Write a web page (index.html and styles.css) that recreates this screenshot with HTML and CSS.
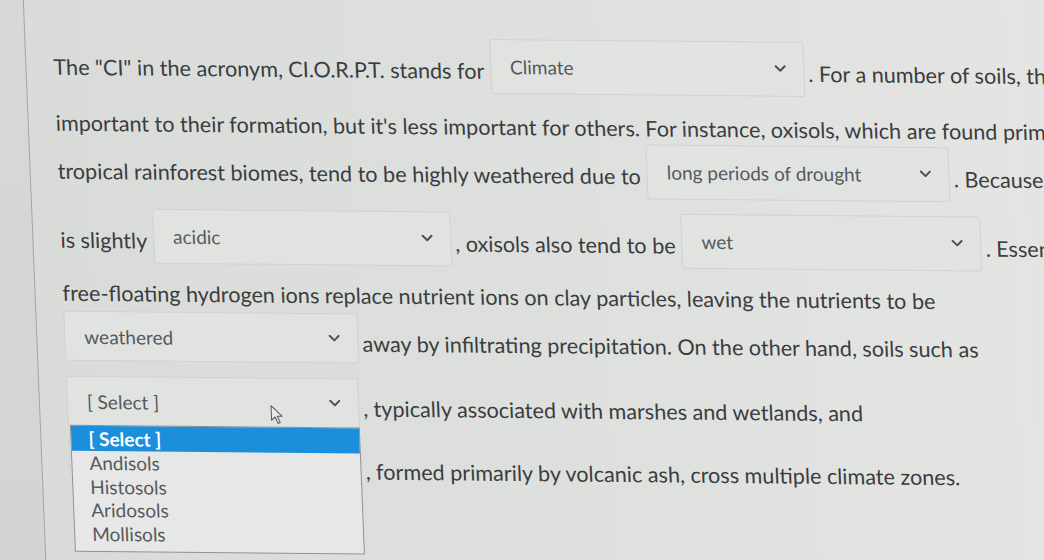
FILE: index.html
```html
<!DOCTYPE html>
<html lang="en">
<head>
<meta charset="utf-8">
<title>Quiz question</title>
<link rel="stylesheet" href="styles.css">
</head>
<body>
<div class="page">
  <div class="rail"></div>
  <div class="content">
    <div class="q-line">
      <span>The "CI" in the acronym, CI.O.R.P.T. stands for</span>
      <div class="dd dd-w314"><span class="dd-value">Climate</span><svg class="chev" viewBox="0 0 12 8"><path d="M1.5 1.5 L6 6 L10.5 1.5"/></svg></div>
      <span>. For a number of soils, the climate is very</span>
    </div>
    <div class="q-line">
      <span>important to their formation, but it's less important for others. For instance, oxisols, which are found primarily in</span>
    </div>
    <div class="q-line">
      <span>tropical rainforest biomes, tend to be highly weathered due to</span>
      <div class="dd dd-w303"><span class="dd-value">long periods of drought</span><svg class="chev" viewBox="0 0 12 8"><path d="M1.5 1.5 L6 6 L10.5 1.5"/></svg></div>
      <span>. Because the soil</span>
    </div>
    <div class="q-line">
      <span>is slightly</span>
      <div class="dd dd-w298"><span class="dd-value">acidic</span><svg class="chev" viewBox="0 0 12 8"><path d="M1.5 1.5 L6 6 L10.5 1.5"/></svg></div>
      <span>, oxisols also tend to be</span>
      <div class="dd dd-w300"><span class="dd-value">wet</span><svg class="chev" viewBox="0 0 12 8"><path d="M1.5 1.5 L6 6 L10.5 1.5"/></svg></div>
      <span>. Essentially,</span>
    </div>
    <div class="q-line">
      <span>free-floating hydrogen ions replace nutrient ions on clay particles, leaving the nutrients to be</span>
    </div>
    <div class="q-line">
      <div class="dd dd-w294 dd-short"><span class="dd-value">weathered</span><svg class="chev" viewBox="0 0 12 8"><path d="M1.5 1.5 L6 6 L10.5 1.5"/></svg></div>
      <span>away by infiltrating precipitation. On the other hand, soils such as</span>
    </div>
    <div class="q-line">
      <div class="dd dd-w292 dd-short dd-open">
        <span class="dd-value">[ Select ]</span><svg class="chev" viewBox="0 0 12 8"><path d="M1.5 1.5 L6 6 L10.5 1.5"/></svg>
        <svg class="cursor" viewBox="0 0 13 20"><path d="M1 1 L1 15.5 L4.6 12.2 L7.4 18.6 L9.6 17.6 L6.9 11.4 L11.6 11.4 Z"/></svg>
        <ul class="dd-list">
          <li class="is-active">[ Select ]</li>
          <li>Andisols</li>
          <li>Histosols</li>
          <li>Aridosols</li>
          <li>Mollisols</li>
        </ul>
      </div>
      <span>, typically associated with marshes and wetlands, and</span>
    </div>
    <div class="q-line">
      <div class="dd dd-w292 dd-short"><span class="dd-value">[ Select ]</span><svg class="chev" viewBox="0 0 12 8"><path d="M1.5 1.5 L6 6 L10.5 1.5"/></svg></div>
      <span>, formed primarily by volcanic ash, cross multiple climate zones.</span>
    </div>
  </div>
</div>
</body>
</html>
```

FILE: styles.css
```css
html, body {
  margin: 0;
  height: 100%;
  overflow: hidden;
}

body {
  background: #d6d8d6;
  font-family: Lato, "Open Sans", "Liberation Sans", sans-serif;
}

.page {
  display: flex;
  width: 1300px;
  height: 660px;
  margin: -20px 0 0 -30px;
  transform: skew(2.3deg, 0.55deg);
  transform-origin: 0 0;
  background: linear-gradient(90deg, #d9dbd9 0%, #dee0de 45%, #e4e5e3 80%, #e2e3e1 100%);
}

.rail {
  flex: 0 0 52px;
  background: linear-gradient(180deg, #d7d9d7, #d2d4d2);
  border-right: 1.5px solid #a3a5a3;
}

.content {
  flex: 1;
  padding: 66px 0 0 27px;
  color: #3a3d40;
  font-size: 21.6px;
}

.q-line {
  display: flex;
  align-items: center;
  height: 40px;
  white-space: nowrap;
}

.q-line:nth-child(2) { margin-top: 16px; }
.q-line:nth-child(3) { margin-top: 8px; }
.q-line:nth-child(4) { margin-top: 29px; }
.q-line:nth-child(5) { margin-top: 13px; }
.q-line:nth-child(6) { margin-top: 8px; }
.q-line:nth-child(7) { margin-top: 25px; }
.q-line:nth-child(8) { margin-top: 23px; }

.dd {
  position: relative;
  flex: none;
  display: flex;
  align-items: center;
  box-sizing: border-box;
  height: 55px;
  margin: 0 4px 10px 6px;
  padding: 0 17px 0 19px;
  background: #e1e3e1;
  border: 1px solid #d0d2d0;
  border-radius: 3px;
  color: #54595d;
  font-size: 19px;
}

.dd-short { height: 50px; margin-left: 0; }

.dd-w314 { width: 314px; }
.dd-w303 { width: 303px; }
.dd-w300 { width: 300px; }
.dd-w298 { width: 298px; }
.dd-w294 { width: 294px; }
.dd-w292 { width: 292px; }

.dd-value { flex: 1; }

.chev {
  width: 12px;
  height: 8px;
  fill: none;
  stroke: #4b5054;
  stroke-width: 2;
  stroke-linecap: round;
  stroke-linejoin: round;
}

.cursor {
  position: absolute;
  left: 202px;
  top: 26px;
  width: 13px;
  height: 20px;
  fill: #e8e9e8;
  stroke: #5a5e62;
  stroke-width: 1.1;
  stroke-linejoin: round;
  z-index: 3;
}

.dd-list {
  position: absolute;
  top: 100%;
  left: 1px;
  z-index: 2;
  box-sizing: border-box;
  width: 290px;
  margin: 0;
  padding: 0 0 6px;
  list-style: none;
  background: #e6e7e6;
  border: 1px solid #8e9294;
  color: #55595c;
  font-size: 19px;
}

.dd-list li {
  height: 23.5px;
  line-height: 23.5px;
  padding-left: 17px;
}

.dd-list li.is-active {
  height: 25px;
  line-height: 25px;
  background: #1b8fdc;
  color: #fff;
  font-weight: 700;
}
```
